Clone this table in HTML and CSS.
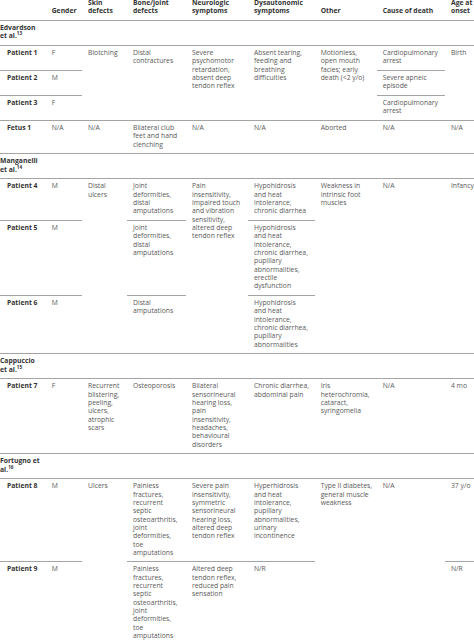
FILE: index.html
```html
<!DOCTYPE html>
<html lang="en">
<head>
<meta charset="utf-8">
<title>Clinical features</title>
<link rel="stylesheet" href="styles.css">
</head>
<body>
<table class="t">
  <colgroup>
    <col class="c-name"><col class="c-gender"><col class="c-skin"><col class="c-bone"><col class="c-neuro"><col class="c-dys"><col class="c-other"><col class="c-cause"><col class="c-age">
  </colgroup>
  <thead>
    <tr>
      <th></th>
      <th>Gender</th>
      <th>Skin<br>defects</th>
      <th>Bone/joint<br>defects</th>
      <th>Neurologic<br>symptoms</th>
      <th>Dysautonomic<br>symptoms</th>
      <th>Other</th>
      <th>Cause of death</th>
      <th>Age at<br>onset</th>
    </tr>
  </thead>
  <tbody>
    <tr class="study"><td colspan="9">Edvardson<br>et al.<sup>13</sup></td></tr>
    <tr>
      <td class="pt">Patient 1</td>
      <td>F</td>
      <td rowspan="3">Blotching</td>
      <td rowspan="3">Distal<br>contractures</td>
      <td rowspan="3">Severe<br>psychomotor<br>retardation,<br>absent deep<br>tendon reflex</td>
      <td rowspan="3">Absent tearing,<br>feeding and<br>breathing<br>difficulties</td>
      <td rowspan="3">Motionless,<br>open mouth<br>facies; early<br>death (&lt;2 y/o)</td>
      <td>Cardiopulmonary<br>arrest</td>
      <td rowspan="3">Birth</td>
    </tr>
    <tr>
      <td class="pt">Patient 2</td>
      <td>M</td>
      <td>Severe apneic<br>episode</td>
    </tr>
    <tr>
      <td class="pt">Patient 3</td>
      <td>F</td>
      <td>Cardiopulmonary<br>arrest</td>
    </tr>
    <tr>
      <td class="pt">Fetus 1</td>
      <td>N/A</td>
      <td>N/A</td>
      <td>Bilateral club<br>feet and hand<br>clenching</td>
      <td>N/A</td>
      <td>N/A</td>
      <td>Aborted</td>
      <td>N/A</td>
      <td>N/A</td>
    </tr>

    <tr class="study"><td colspan="9">Manganelli<br>et al.<sup>14</sup></td></tr>
    <tr>
      <td class="pt">Patient 4</td>
      <td>M</td>
      <td rowspan="3">Distal<br>ulcers</td>
      <td>Joint<br>deformities,<br>distal<br>amputations</td>
      <td rowspan="3">Pain<br>insensitivity,<br>impaired touch<br>and vibration<br>sensitivity,<br>altered deep<br>tendon reflex</td>
      <td>Hypohidrosis<br>and heat<br>intolerance,<br>chronic diarrhea</td>
      <td rowspan="3">Weakness in<br>intrinsic foot<br>muscles</td>
      <td rowspan="3">N/A</td>
      <td rowspan="3">Infancy</td>
    </tr>
    <tr>
      <td class="pt">Patient 5</td>
      <td>M</td>
      <td>Joint<br>deformities,<br>distal<br>amputations</td>
      <td>Hypohidrosis<br>and heat<br>intolerance,<br>chronic diarrhea,<br>pupillary<br>abnormalities,<br>erectile<br>dysfunction</td>
    </tr>
    <tr>
      <td class="pt">Patient 6</td>
      <td>M</td>
      <td>Distal<br>amputations</td>
      <td>Hypohidrosis<br>and heat<br>intolerance,<br>chronic diarrhea,<br>pupillary<br>abnormalities</td>
    </tr>

    <tr class="study"><td colspan="9">Cappuccio<br>et al.<sup>15</sup></td></tr>
    <tr>
      <td class="pt">Patient 7</td>
      <td>F</td>
      <td>Recurrent<br>blistering,<br>peeling,<br>ulcers,<br>atrophic<br>scars</td>
      <td>Osteoporosis</td>
      <td>Bilateral<br>sensorineural<br>hearing loss,<br>pain<br>insensitivity,<br>headaches,<br>behavioural<br>disorders</td>
      <td>Chronic diarrhea,<br>abdominal pain</td>
      <td>Iris<br>heterochromia,<br>cataract,<br>syringomelia</td>
      <td>N/A</td>
      <td>4 mo</td>
    </tr>

    <tr class="study"><td colspan="9">Fortugno et<br>al.<sup>16</sup></td></tr>
    <tr>
      <td class="pt">Patient 8</td>
      <td>M</td>
      <td rowspan="2">Ulcers</td>
      <td>Painless<br>fractures,<br>recurrent<br>septic<br>osteoarthritis,<br>joint<br>deformities,<br>toe<br>amputations</td>
      <td>Severe pain<br>insensitivity,<br>symmetric<br>sensorineural<br>hearing loss,<br>altered deep<br>tendon reflex</td>
      <td>Hyperhidrosis<br>and heat<br>intolerance,<br>pupillary<br>abnormalities,<br>urinary<br>incontinence</td>
      <td rowspan="2">Type II diabetes,<br>general muscle<br>weakness</td>
      <td rowspan="2">N/A</td>
      <td>37 y/o</td>
    </tr>
    <tr>
      <td class="pt">Patient 9</td>
      <td>M</td>
      <td>Painless<br>fractures,<br>recurrent<br>septic<br>osteoarthritis,<br>joint<br>deformities,<br>toe<br>amputations</td>
      <td>Altered deep<br>tendon reflex,<br>reduced pain<br>sensation</td>
      <td>N/R</td>
      <td>N/R</td>
    </tr>
  </tbody>
</table>
</body>
</html>
```

FILE: styles.css
```css
html, body {
  margin: 0;
  padding: 0;
  background: #ffffff;
  overflow: hidden;
}

.t {
  border-collapse: collapse;
  table-layout: fixed;
  width: 500px;
  margin: -4.5px 0 0 -6px;
  font-family: "Open Sans", "DejaVu Sans", sans-serif;
  font-size: 6.8px;
  line-height: 8.33px;
  color: #5a5a5a;
}

.c-name { width: 51.7px; }
.c-gender { width: 36.3px; }
.c-skin { width: 45px; }
.c-bone { width: 59px; }
.c-neuro { width: 62px; }
.c-dys { width: 66.7px; }
.c-other { width: 62px; }
.c-cause { width: 68.3px; }
.c-age { width: 49px; }

.t th,
.t td {
  padding: 3px 2px 4.33px 6px;
  text-align: left;
  vertical-align: top;
  white-space: nowrap;
  border-bottom: 1px solid #a4a4a4;
}

.t th {
  font-weight: 700;
  color: #333333;
  vertical-align: bottom;
  padding-bottom: 5px;
}

.t td.pt {
  padding-left: 13px;
  font-weight: 700;
  color: #333333;
}

.study td {
  font-weight: 700;
  color: #333333;
}

.study sup {
  font-size: 4.6px;
  line-height: 0;
  vertical-align: 3px;
}
```
